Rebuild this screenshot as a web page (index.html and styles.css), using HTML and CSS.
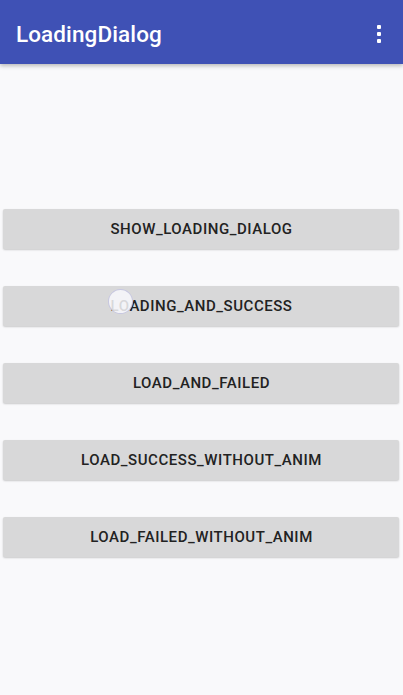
FILE: index.html
```html
<!DOCTYPE html>
<html>
<head>
<meta charset="utf-8">
<link rel="stylesheet" href="styles.css">
</head>
<body>
<header class="appbar">
  <span class="title">LoadingDialog</span>
  <span class="menu"><i></i><i></i><i></i></span>
</header>
<main class="content">
  <button class="btn">SHOW_LOADING_DIALOG</button>
  <button class="btn ripple-host">LOADING_AND_SUCCESS<span class="ripple"></span></button>
  <button class="btn">LOAD_AND_FAILED</button>
  <button class="btn">LOAD_SUCCESS_WITHOUT_ANIM</button>
  <button class="btn">LOAD_FAILED_WITHOUT_ANIM</button>
</main>
</body>
</html>
```
FILE: styles.css
```css
html, body {
  margin: 0;
  padding: 0;
  height: 100%;
}
body {
  background: #f9f9fb;
  font-family: Roboto, "Noto Sans", sans-serif;
  overflow: hidden;
}
.appbar {
  height: 64px;
  background: #3f51b5;
  display: flex;
  align-items: center;
  justify-content: space-between;
  padding: 0 22px 0 16px;
  box-sizing: border-box;
  box-shadow: 0 2px 4px rgba(0,0,0,0.25);
  position: relative;
}
.title {
  color: #fff;
  font-size: 22.5px;
  font-weight: 500;
  margin-top: 4px;
  letter-spacing: 0.1px;
}
.menu {
  display: flex;
  flex-direction: column;
  gap: 3px;
  margin-top: 3px;
}
.menu i {
  display: block;
  width: 4px;
  height: 4px;
  background: #fff;
  border-radius: 1px;
}
.content {
  display: flex;
  flex-direction: column;
  gap: 37px;
  padding: 145px 4px 0 3px;
}
.btn {
  height: 40px;
  border: none;
  border-radius: 2px;
  background: #d8d8d9;
  color: #222;
  font-family: Roboto, "Noto Sans", sans-serif;
  font-size: 15px;
  font-weight: 500;
  letter-spacing: 0.55px;
  box-shadow: 0 1px 2px rgba(0,0,0,0.2);
  padding: 0 0 0 1px;
}
.ripple-host {
  position: relative;
}
.ripple {
  position: absolute;
  left: 105px;
  top: 3px;
  width: 25px;
  height: 25px;
  border-radius: 50%;
  background: rgba(248,248,252,0.85);
  border: 1px solid rgba(170,170,210,0.6);
  box-sizing: border-box;
}
```
